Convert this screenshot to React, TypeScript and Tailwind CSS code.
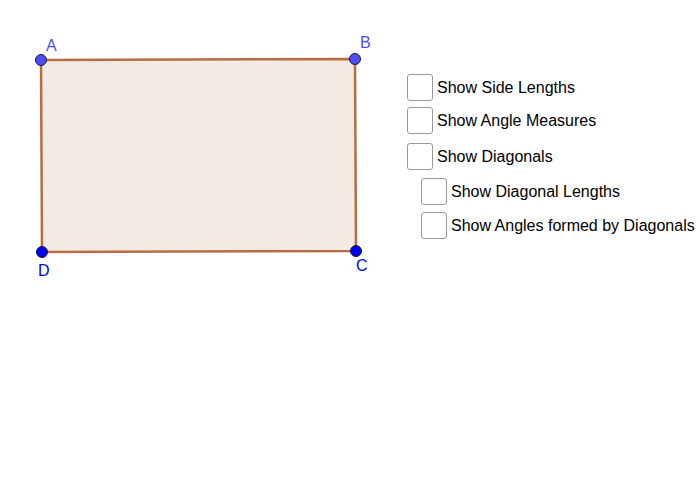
const options = [
  { label: "Show Side Lengths", indent: false, mt: "mt-0" },
  { label: "Show Angle Measures", indent: false, mt: "mt-[6px]" },
  { label: "Show Diagonals", indent: false, mt: "mt-[9px]" },
  { label: "Show Diagonal Lengths", indent: true, mt: "mt-[8px]" },
  { label: "Show Angles formed by Diagonals", indent: true, mt: "mt-[7px]" },
];

const Rectangle = () => {
  return (
    <svg width="400" height="300" className="shrink-0" style={{ fontFamily: "'Liberation Sans', Arial, sans-serif" }}>
      <polygon points="41,60 355,59 356,251 42,252" fill="#f3eae4" stroke="#b86c42" strokeWidth="2.5" strokeLinejoin="round" />
      <circle cx="41" cy="60" r="5.5" fill="#4d4dff" stroke="#1a1a1a" strokeWidth="1" />
      <circle cx="355" cy="59" r="5.5" fill="#4d4dff" stroke="#1a1a1a" strokeWidth="1" />
      <circle cx="356" cy="251" r="5.5" fill="#0000ff" stroke="#1a1a1a" strokeWidth="1" />
      <circle cx="42" cy="252" r="5.5" fill="#0000ff" stroke="#1a1a1a" strokeWidth="1" />
      <text x="46" y="51" fontSize="16" fill="#4d4dff">A</text>
      <text x="360" y="48" fontSize="16" fill="#4d4dff">B</text>
      <text x="356" y="271" fontSize="16" fill="#0000ff">C</text>
      <text x="38" y="276" fontSize="16" fill="#0000ff">D</text>
    </svg>
  );
};

export default function App() {
  return (
    <div className="w-[700px] h-[500px] bg-white flex overflow-hidden font-['Liberation_Sans',Arial,sans-serif]">
      <Rectangle />
      <div className="flex flex-col pt-[74px] pl-[7px]">
        {options.map((o) => (
          <label
            key={o.label}
            className={`flex items-center gap-[4px] ${o.mt} ${o.indent ? "ml-[14px]" : ""}`}
          >
            <span className="w-[26px] h-[27px] rounded-[3px] border border-[#9a9a9a] bg-white shrink-0" />
            <span className="text-[16px] text-black leading-none whitespace-nowrap">{o.label}</span>
          </label>
        ))}
      </div>
    </div>
  );
}
